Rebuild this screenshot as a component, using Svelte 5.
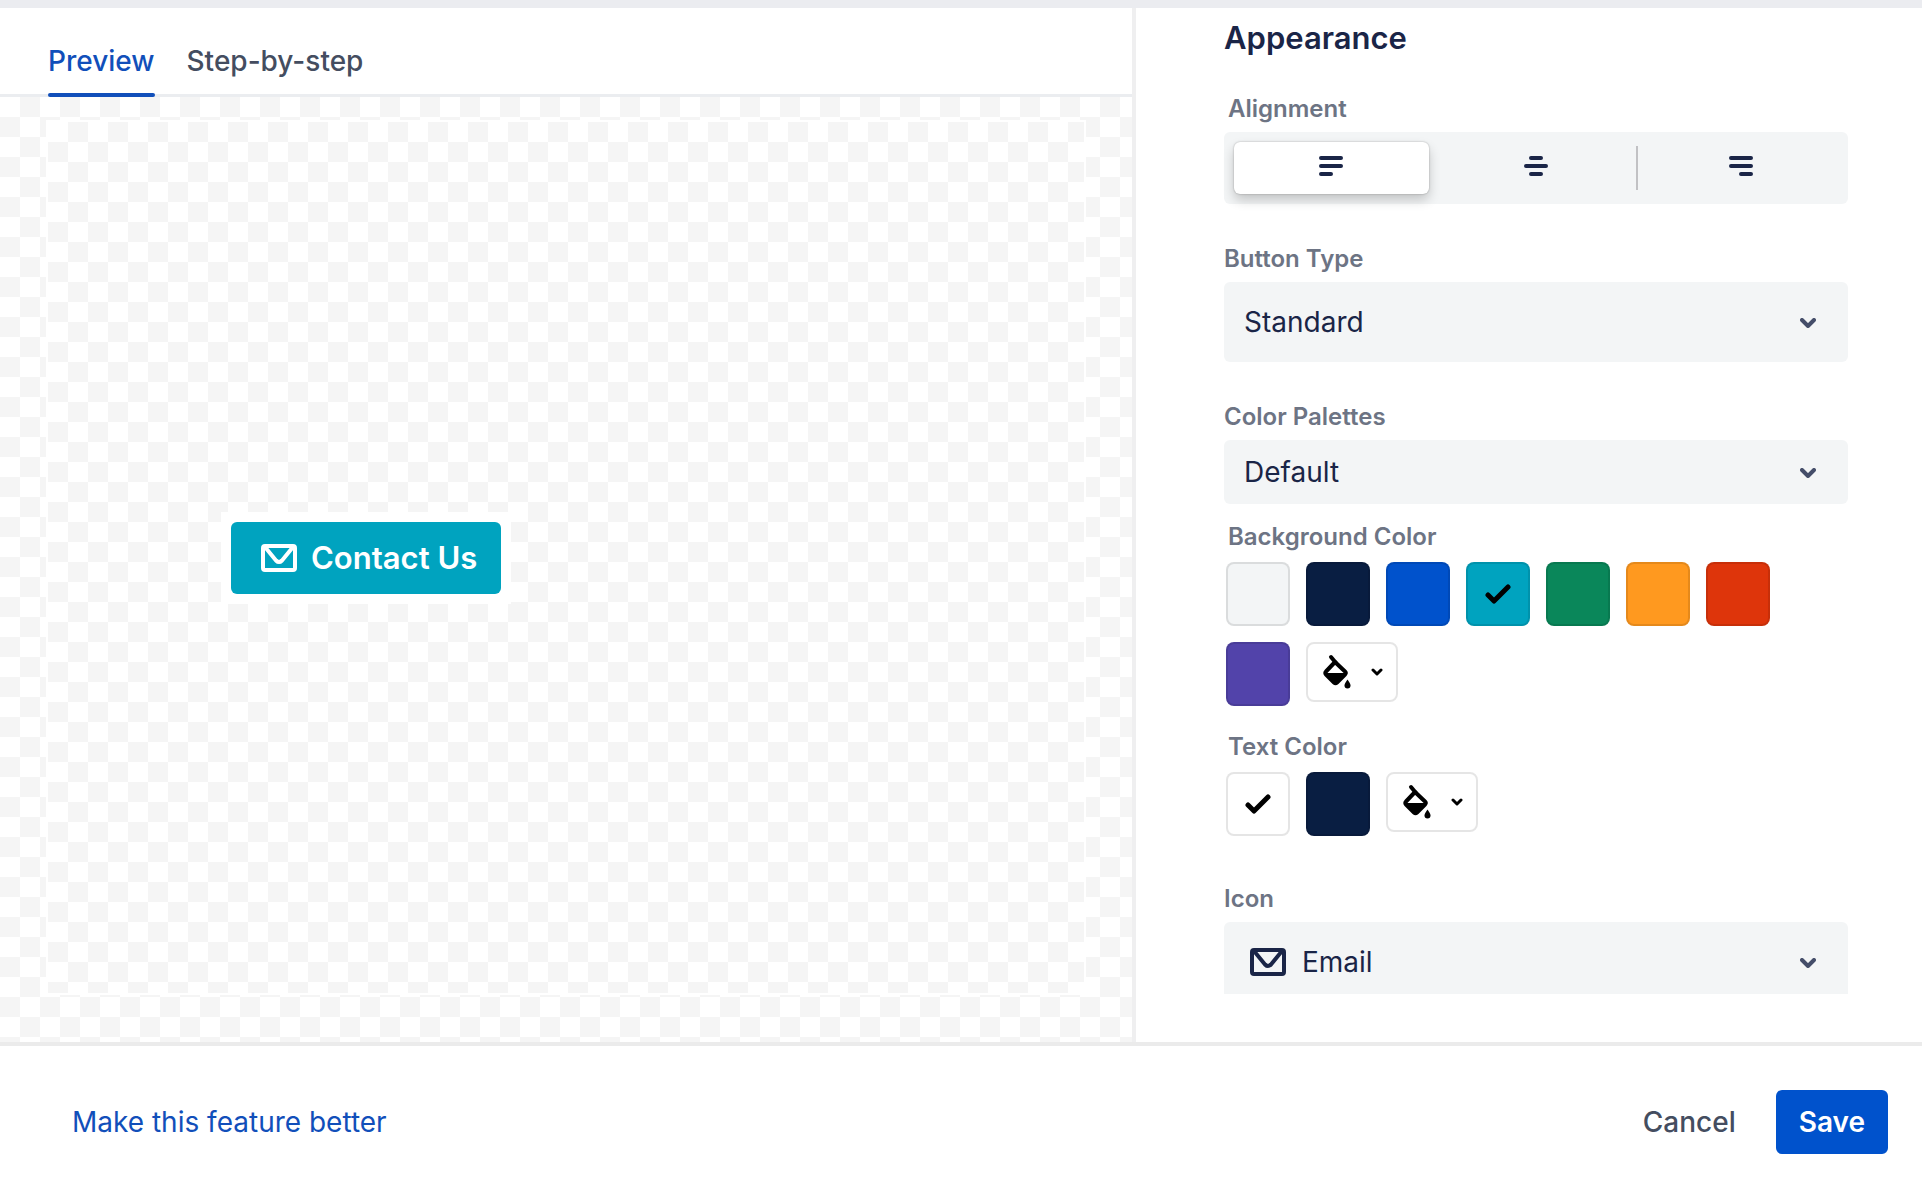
<script>
	let align = $state("left");
	let background = $state("#00a3bf");
	let textColor = $state("#ffffff");
	let buttonType = $state("Standard");
	let palette = $state("Default");
	let icon = $state("Email");

	const alignments = [
		{ name: "left", path: "M2 2h20M2 10h20M2 18h10" },
		{ name: "center", path: "M7 2h10M2 10h20M7 18h10" },
		{ name: "right", path: "M2 2h20M2 10h20M12 18h10" },
	];

	const backgrounds = [
		{ name: "Light gray", value: "#f3f5f6" },
		{ name: "Navy", value: "#091e42" },
		{ name: "Blue", value: "#0052cc" },
		{ name: "Teal", value: "#00a3bf" },
		{ name: "Green", value: "#0a875a" },
		{ name: "Orange", value: "#ff991f" },
		{ name: "Red", value: "#de350b" },
		{ name: "Purple", value: "#5243aa" },
	];

	const textColors = [
		{ name: "White", value: "#ffffff" },
		{ name: "Navy", value: "#091e42" },
	];
</script>

{#snippet mail()}
	<svg class="mail" width="36" height="28" viewBox="0 0 36 28" aria-hidden="true">
		<rect x="2" y="2" width="32" height="24" rx="2" />
		<path d="M4 3l11 13.500q3 3 6 0L32 3" />
	</svg>
{/snippet}

{#snippet chevron()}
	<svg class="chevron" width="16" height="10" viewBox="0 0 16 10" aria-hidden="true">
		<path d="M2 2l6 6 6-6" />
	</svg>
{/snippet}

{#snippet swatches(colors, selected, pick, label)}
	<div class="swatches" role="group" aria-label={label}>
		{#each colors as color}
			<button
				class="swatch"
				aria-label={color.name}
				aria-pressed={selected === color.value}
				style="background-color: {color.value}"
				onclick={() => pick(color.value)}
			>
				{#if selected === color.value}
					<svg width="26" height="20" viewBox="0 0 26 20" aria-hidden="true">
						<path d="M3 11l6 6L23 3" />
					</svg>
				{/if}
			</button>
		{/each}
		<button class="picker" aria-label="Custom {label}">
			<svg class="bucket" width="28" height="36" viewBox="0 0 28 36" aria-hidden="true">
				<path class="line" d="M8 3l5 6" />
				<path class="line" d="M12 8L3 17.500q-1.500 1.500 0 3L11 28.500q1.500 1.500 3 0L22 20.500q1.500-1.500 0-3z" />
				<path d="M2 19h21l-1 2-8 8q-1.500 1-3 0l-8-8z" />
				<path d="M24.500 25.500c2 3 3 4.500 3 6a3 3 0 0 1-6 0c0-1.500 1-3 3-6z" />
			</svg>
			<svg class="small-chevron" width="12" height="8" viewBox="0 0 12 8" aria-hidden="true">
				<path d="M2 2l4 4 4-4" />
			</svg>
		</button>
	</div>
{/snippet}

<div class="dialog">
	<main>
		<section class="left-pane">
			<nav>
				<button class="tab active">Preview</button>
				<button class="tab">Step-by-step</button>
			</nav>
			<div class="canvas checks">
				<div class="stage checks">
					<div class="frame">
						<button
							class="contact"
							style="background-color: {background}; color: {textColor}"
						>
							{@render mail()}
							Contact Us
						</button>
					</div>
				</div>
			</div>
		</section>

		<aside>
			<h2>Appearance</h2>

			<p class="label indent">Alignment</p>
			<div class="segments" role="group" aria-label="Alignment">
				{#each alignments as item}
					<button
						class="segment"
						class:selected={align === item.name}
						aria-label={item.name}
						aria-pressed={align === item.name}
						onclick={() => (align = item.name)}
					>
						<svg width="24" height="20" viewBox="0 0 24 20" aria-hidden="true">
							<path d={item.path} />
						</svg>
					</button>
				{/each}
			</div>

			<label class="label spaced" for="button-type">Button Type</label>
			<div class="select tall">
				<select id="button-type" bind:value={buttonType}>
					<option>Standard</option>
				</select>
				{@render chevron()}
			</div>

			<label class="label spaced" for="palette">Color Palettes</label>
			<div class="select">
				<select id="palette" bind:value={palette}>
					<option>Default</option>
				</select>
				{@render chevron()}
			</div>

			<p class="label indent background-label">Background Color</p>
			{@render swatches(backgrounds, background, (c) => (background = c), "Background Color")}

			<p class="label indent text-label">Text Color</p>
			{@render swatches(textColors, textColor, (c) => (textColor = c), "Text Color")}

			<label class="label icon-label" for="icon">Icon</label>
			<div class="select with-icon">
				<select id="icon" bind:value={icon}>
					<option>Email</option>
				</select>
				{@render mail()}
				{@render chevron()}
			</div>
		</aside>
	</main>

	<footer>
		<a href="#feedback">Make this feature better</a>
		<div class="actions">
			<button class="cancel">Cancel</button>
			<button class="save">Save</button>
		</div>
	</footer>
</div>

<style>
	:global(body) {
		margin: 0;
		background: #fff;
	}

	.dialog {
		display: flex;
		flex-direction: column;
		min-height: 100vh;
		box-sizing: border-box;
		border-top: 8px solid #ebecf0;
		font-family: Inter, "Liberation Sans", sans-serif;
		font-size: 28px;
		color: #1a2547;
	}

	button,
	select {
		font: inherit;
		border: 0;
		margin: 0;
		padding: 0;
		background: none;
		cursor: pointer;
	}

	svg {
		display: block;
		flex: none;
		fill: none;
		stroke: currentColor;
		stroke-width: 4;
		stroke-linecap: round;
		stroke-linejoin: round;
	}

	main {
		flex: 1;
		display: grid;
		grid-template-columns: minmax(0, 1fr) 786px;
		border-bottom: 4px solid #ebebeb;
	}

	/* Preview side */
	.left-pane {
		display: flex;
		flex-direction: column;
		border-right: 4px solid #efeff0;
	}

	nav {
		display: flex;
		gap: 32px;
		padding: 0 48px;
		box-shadow: inset 0 -3px #ebedf0;
	}

	.tab {
		padding-top: 35px;
		line-height: 36px;
		font-weight: 500;
		color: #444d60;
	}

	.tab::after {
		content: "";
		display: block;
		height: 4px;
		margin-top: 14px;
		border-radius: 2px;
	}

	.tab.active {
		color: #114fba;
	}

	.tab.active::after {
		background: #114fba;
	}

	.checks {
		background-color: #fff;
		background-image: conic-gradient(
			#fff 25%,
			#f5f5f5 0 50%,
			#fff 0 75%,
			#f5f5f5 0
		);
		background-size: 40px 40px;
		background-position: 20px 0;
	}

	.canvas {
		flex: 1;
		display: flex;
		padding: 23px 46px 47px;
	}

	.stage {
		flex: 1;
		display: flex;
		align-items: center;
		padding-left: 173px;
		border: 2px solid #fff;
	}

	.frame {
		padding: 10px;
		background: #fff;
	}

	.contact {
		display: flex;
		align-items: center;
		gap: 14px;
		height: 72px;
		padding: 0 24px 0 30px;
		border-radius: 6px;
		font-size: 31px;
		font-weight: 600;
	}

	/* Settings side */
	aside {
		padding: 10px 74px 48px 88px;
	}

	h2 {
		margin: 0 0 34px;
		font-size: 31px;
		line-height: 40px;
		font-weight: 600;
	}

	.label {
		display: block;
		margin: 0 0 6px;
		font-size: 24px;
		line-height: 34px;
		font-weight: 600;
		color: #6d7484;
	}

	.indent {
		padding-left: 4px;
	}

	.spaced {
		margin-top: 38px;
	}

	.background-label {
		margin: 16px 0 8px;
	}

	.text-label {
		margin: 24px 0 8px;
	}

	.icon-label {
		margin-top: 46px;
	}

	.segments {
		display: grid;
		grid-template-columns: repeat(3, 1fr);
		gap: 10px;
		padding: 10px;
		border-radius: 6px;
		background: #f3f5f6;
	}

	.segment {
		position: relative;
		display: grid;
		place-items: center;
		height: 52px;
		padding-bottom: 4px;
		border-radius: 6px;
		color: #1a2547;
	}

	.segment.selected {
		background: #fff;
		box-shadow: 0 6px 12px rgba(0, 0, 0, 0.2), 0 0 2px rgba(0, 0, 0, 0.3);
	}

	.segment:nth-child(2)::after {
		content: "";
		position: absolute;
		top: 4px;
		bottom: 4px;
		right: -5px;
		width: 2px;
		background: #c1c1c4;
	}

	.select {
		display: grid;
		align-items: center;
		height: 64px;
		box-sizing: border-box;
		border-radius: 6px;
		background: #f3f5f6;
	}

	.select > :global(*) {
		grid-area: 1 / 1;
	}

	.select select {
		appearance: none;
		width: 100%;
		height: 100%;
		padding: 0 64px 0 20px;
		color: #1a2547;
	}

	.select .chevron {
		justify-self: end;
		margin: 2px 32px 0 0;
		color: #444d69;
		pointer-events: none;
	}

	.select .mail {
		margin-left: 26px;
		pointer-events: none;
	}

	.tall {
		height: 80px;
	}

	.with-icon {
		height: 72px;
		padding-top: 8px;
		border-radius: 6px 6px 0 0;
	}

	.with-icon select {
		padding-left: 78px;
	}

	.swatches {
		display: flex;
		flex-wrap: wrap;
		align-items: flex-start;
		gap: 16px;
		padding: 0 2px;
	}

	.swatch,
	.picker {
		display: flex;
		align-items: center;
		justify-content: center;
		box-sizing: border-box;
		border: 2px solid rgba(0, 0, 0, 0.1);
		border-radius: 8px;
		color: #000;
	}

	.swatch {
		width: 64px;
		height: 64px;
	}

	.swatch svg {
		stroke-width: 5;
	}

	.picker {
		gap: 20px;
		width: 92px;
		height: 60px;
		padding-left: 2px;
	}

	.small-chevron {
		stroke-width: 3;
	}

	.bucket {
		fill: #000;
		stroke: none;
	}

	.bucket .line {
		fill: none;
		stroke: #000;
	}

	footer {
		display: flex;
		align-items: center;
		justify-content: space-between;
		padding: 44px 34px 24px 72px;
	}

	a {
		color: #114fba;
		text-decoration: none;
	}

	.actions {
		display: flex;
		align-items: center;
		gap: 40px;
	}

	.cancel {
		font-weight: 500;
		color: #444d60;
	}

	.save {
		height: 64px;
		padding: 0 23px;
		border-radius: 6px;
		background: #0052cc;
		color: #fff;
		font-weight: 600;
	}
</style>
